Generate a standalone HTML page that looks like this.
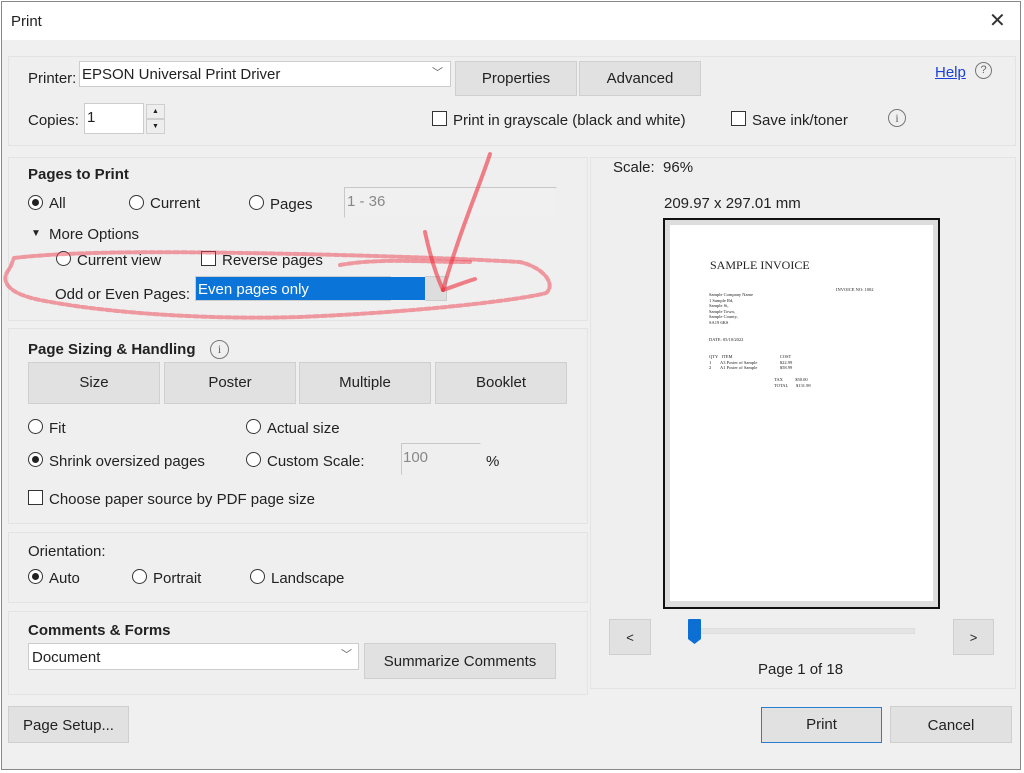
<!DOCTYPE html>
<html><head><meta charset="utf-8"><style>
*{box-sizing:border-box;margin:0;padding:0}
body{width:1024px;height:773px;background:#fff;font-family:"Liberation Sans",sans-serif;font-size:15px;color:#222;position:relative;overflow:hidden}
.a{position:absolute;white-space:nowrap}
.win{position:absolute;left:1px;top:1px;width:1020px;height:769px;border:1px solid #888;background:#f0f0f0}
.panel{position:absolute;background:#efefef;border:1px solid #e3e3e3}
.btn{position:absolute;background:#e1e1e1;border:1px solid #cfcfcf;text-align:center;color:#222}
.inp{position:absolute;background:#fff;border:1px solid #bbb}
.rad{position:absolute;width:15px;height:15px;border:1px solid #333;border-radius:50%;background:#fff}
.rad.on::after{content:"";position:absolute;left:3px;top:3px;width:7px;height:7px;border-radius:50%;background:#222}
.chk{position:absolute;width:15px;height:15px;border:1px solid #333;background:#fff}
b{font-weight:bold}
</style></head><body>
<div class="win"></div>
<div class="a" style="left:2px;top:2px;width:1018px;height:38px;background:#fff"></div>
<div class="a" style="left:11px;top:13px;font-size:15px">Print</div>
<div class="a" style="left:989px;top:8px;font-size:20px;color:#333">✕</div>

<!-- top panel -->
<div class="panel" style="left:8px;top:56px;width:1008px;height:90px"></div>
<div class="a" style="left:28px;top:70px">Printer:</div>
<div class="inp" style="left:79px;top:61px;width:372px;height:26px;border-color:#ccc"></div>
<div class="a" style="left:82px;top:66px">EPSON Universal Print Driver</div>
<div class="a" style="left:432px;top:64px;font-size:11px;color:#666">﹀</div>
<div class="btn" style="left:455px;top:61px;width:122px;height:35px;line-height:33px">Properties</div>
<div class="btn" style="left:579px;top:61px;width:122px;height:35px;line-height:33px">Advanced</div>
<div class="a" style="left:935px;top:64px;color:#1a3fd8;text-decoration:underline">Help</div>
<div class="a" style="left:975px;top:62px;width:17px;height:17px;border:1px solid #777;border-radius:50%;font-size:11px;text-align:center;line-height:15px;color:#666">?</div>
<div class="a" style="left:28px;top:112px">Copies:</div>
<div class="inp" style="left:84px;top:103px;width:60px;height:31px;border-color:#ccc"></div>
<div class="a" style="left:87px;top:109px">1</div>
<div class="btn" style="left:146px;top:104px;width:19px;height:15px;font-size:7px;line-height:13px;background:#eee">▲</div>
<div class="btn" style="left:146px;top:119px;width:19px;height:15px;font-size:7px;line-height:13px;background:#eee">▼</div>
<div class="chk" style="left:432px;top:111px"></div>
<div class="a" style="left:453px;top:112px">Print in grayscale (black and white)</div>
<div class="chk" style="left:731px;top:111px"></div>
<div class="a" style="left:752px;top:112px">Save ink/toner</div>
<div class="a" style="left:888px;top:109px;width:18px;height:18px;border:1px solid #777;border-radius:50%;font-size:12px;text-align:center;line-height:16px;color:#666;font-family:'Liberation Serif',serif">i</div>

<!-- pages to print -->
<div class="panel" style="left:8px;top:157px;width:580px;height:164px"></div>
<div class="a" style="left:28px;top:166px"><b>Pages to Print</b></div>
<div class="rad on" style="left:28px;top:195px"></div><div class="a" style="left:49px;top:195px">All</div>
<div class="rad" style="left:129px;top:195px"></div><div class="a" style="left:150px;top:195px">Current</div>
<div class="rad" style="left:249px;top:195px"></div><div class="a" style="left:270px;top:196px">Pages</div>
<div class="a" style="left:344px;top:187px;width:213px;height:31px;border:1px solid #c8c8c8;border-right-color:#eee;border-bottom-color:#eee;background:#f0f0f0"></div>
<div class="a" style="left:347px;top:193px;color:#888">1 - 36</div>
<div class="a" style="left:31px;top:228px;font-size:10px">▼</div>
<div class="a" style="left:49px;top:226px">More Options</div>
<div class="rad" style="left:56px;top:251px"></div><div class="a" style="left:77px;top:252px">Current view</div>
<div class="chk" style="left:201px;top:251px"></div><div class="a" style="left:222px;top:252px">Reverse pages</div>
<div class="a" style="left:55px;top:286px">Odd or Even Pages:</div>
<div class="a" style="left:195px;top:276px;width:196px;height:25px;background:#ddd;border:1px solid #ccc;width:196px"></div>
<div class="a" style="left:196px;top:277px;width:229px;height:23px;background:#0b74d8"></div>
<div class="a" style="left:425px;top:276px;width:22px;height:25px;background:#ddd;border:1px solid #ccc;border-left:0"></div>
<div class="a" style="left:198px;top:281px;color:#fff">Even pages only</div>

<!-- page sizing -->
<div class="panel" style="left:8px;top:328px;width:580px;height:196px"></div>
<div class="a" style="left:28px;top:341px"><b>Page Sizing &amp; Handling</b></div>
<div class="a" style="left:210px;top:340px;width:19px;height:19px;border:1px solid #777;border-radius:50%;font-size:12px;text-align:center;line-height:17px;color:#666;font-family:'Liberation Serif',serif">i</div>
<div class="btn" style="left:28px;top:362px;width:132px;height:42px;line-height:40px">Size</div>
<div class="btn" style="left:164px;top:362px;width:132px;height:42px;line-height:40px">Poster</div>
<div class="btn" style="left:299px;top:362px;width:132px;height:42px;line-height:40px">Multiple</div>
<div class="btn" style="left:435px;top:362px;width:132px;height:42px;line-height:40px">Booklet</div>
<div class="rad" style="left:28px;top:419px"></div><div class="a" style="left:49px;top:420px">Fit</div>
<div class="rad" style="left:246px;top:419px"></div><div class="a" style="left:267px;top:420px">Actual size</div>
<div class="rad on" style="left:28px;top:452px"></div><div class="a" style="left:49px;top:453px">Shrink oversized pages</div>
<div class="rad" style="left:246px;top:452px"></div><div class="a" style="left:267px;top:453px">Custom Scale:</div>
<div class="a" style="left:401px;top:443px;width:80px;height:32px;border:1px solid #c8c8c8;border-right-color:#eee;border-bottom-color:#eee"></div>
<div class="a" style="left:403px;top:449px;color:#888">100</div>
<div class="a" style="left:486px;top:453px">%</div>
<div class="chk" style="left:28px;top:490px"></div><div class="a" style="left:49px;top:491px">Choose paper source by PDF page size</div>

<!-- orientation -->
<div class="panel" style="left:8px;top:532px;width:580px;height:71px"></div>
<div class="a" style="left:28px;top:543px">Orientation:</div>
<div class="rad on" style="left:28px;top:569px"></div><div class="a" style="left:49px;top:570px">Auto</div>
<div class="rad" style="left:132px;top:569px"></div><div class="a" style="left:153px;top:570px">Portrait</div>
<div class="rad" style="left:250px;top:569px"></div><div class="a" style="left:271px;top:570px">Landscape</div>

<!-- comments -->
<div class="panel" style="left:8px;top:611px;width:580px;height:84px"></div>
<div class="a" style="left:28px;top:622px"><b>Comments &amp; Forms</b></div>
<div class="inp" style="left:28px;top:643px;width:331px;height:27px;border-color:#ccc"></div>
<div class="a" style="left:32px;top:649px">Document</div>
<div class="a" style="left:341px;top:646px;font-size:11px;color:#666">﹀</div>
<div class="btn" style="left:364px;top:643px;width:192px;height:36px;line-height:36px">Summarize Comments</div>

<div class="btn" style="left:8px;top:706px;width:121px;height:37px;line-height:37px">Page Setup...</div>

<!-- right preview -->
<div class="panel" style="left:590px;top:157px;width:426px;height:532px"></div>
<div class="a" style="left:613px;top:159px">Scale:&nbsp; 96%</div>
<div class="a" style="left:664px;top:195px">209.97 x 297.01 mm</div>
<div class="a" style="left:663px;top:218px;width:277px;height:391px;border:2px solid #111;background:#ddd"></div>
<div class="a" style="left:670px;top:225px;width:263px;height:376px;background:#fff"></div>
<div class="a" style="left:710px;top:258px;font-family:'Liberation Serif',serif;font-size:12px">SAMPLE INVOICE</div>
<div class="a" style="left:836px;top:287px;font-family:'Liberation Serif',serif;font-size:4.5px">INVOICE NO: 1002</div>
<div class="a" style="left:709px;top:292px;font-family:'Liberation Serif',serif;font-size:4.5px;line-height:5.5px;white-space:pre">Sample Company Name
1 Sample Rd,
Sample St,
Sample Town,
Sample County,
SA19 6KS</div>
<div class="a" style="left:709px;top:337px;font-family:'Liberation Serif',serif;font-size:4.5px">DATE: 05/10/2022</div>
<div class="a" style="left:709px;top:354px;font-family:'Liberation Serif',serif;font-size:4.5px;line-height:5.5px;white-space:pre">QTY   ITEM                                          COST
1        A3 Poster of Sample                    $22.99
2        A1 Poster of Sample                    $58.99</div>
<div class="a" style="left:774px;top:377px;font-family:'Liberation Serif',serif;font-size:4.5px;line-height:5.5px;white-space:pre">TAX           $50.00
TOTAL       $131.98</div>
<div class="btn" style="left:609px;top:619px;width:42px;height:36px;line-height:36px;font-size:13px">&lt;</div>
<div class="btn" style="left:953px;top:619px;width:41px;height:36px;line-height:36px;font-size:13px">&gt;</div>
<div class="a" style="left:696px;top:628px;width:219px;height:6px;background:#e4e4e4;border:1px solid #ddd"></div>
<svg class="a" style="left:687px;top:618px" width="16" height="28"><path d="M1 2 Q1 1 2 1 H13 Q14 1 14 2 V21 L7.5 26 L1 21Z" fill="#0b6fd4"/></svg>
<div class="a" style="left:758px;top:661px">Page 1 of 18</div>

<div class="btn" style="left:761px;top:707px;width:121px;height:36px;line-height:34px;border:1px solid #2b7cd3">Print</div>
<div class="btn" style="left:890px;top:706px;width:122px;height:37px;line-height:37px">Cancel</div>

<!-- red annotation -->
<svg class="a" style="left:0;top:0" width="1024" height="773">
<g fill="none" stroke="#ee4050" stroke-opacity="0.5" stroke-width="4" stroke-linecap="round" stroke-linejoin="round" stroke-dasharray="5 3">
<path d="M14 258 C80 250 200 252 300 254 C380 256 450 258 520 262 C545 268 556 285 546 293 C520 300 420 312 300 317 C200 320 100 312 40 300 C10 294 -2 282 10 268 Z"/>
<path d="M340 265 C380 258 420 262 470 262"/>
</g>
<g fill="none" stroke="#ee3040" stroke-opacity="0.6" stroke-width="4" stroke-linecap="round" stroke-linejoin="round">
<path d="M490 154 C480 185 460 230 443 290"/>
<path d="M425 232 C430 255 436 275 443 290"/>
<path d="M443 290 C455 286 465 282 475 279"/>
</g>
</svg>
</body></html>
